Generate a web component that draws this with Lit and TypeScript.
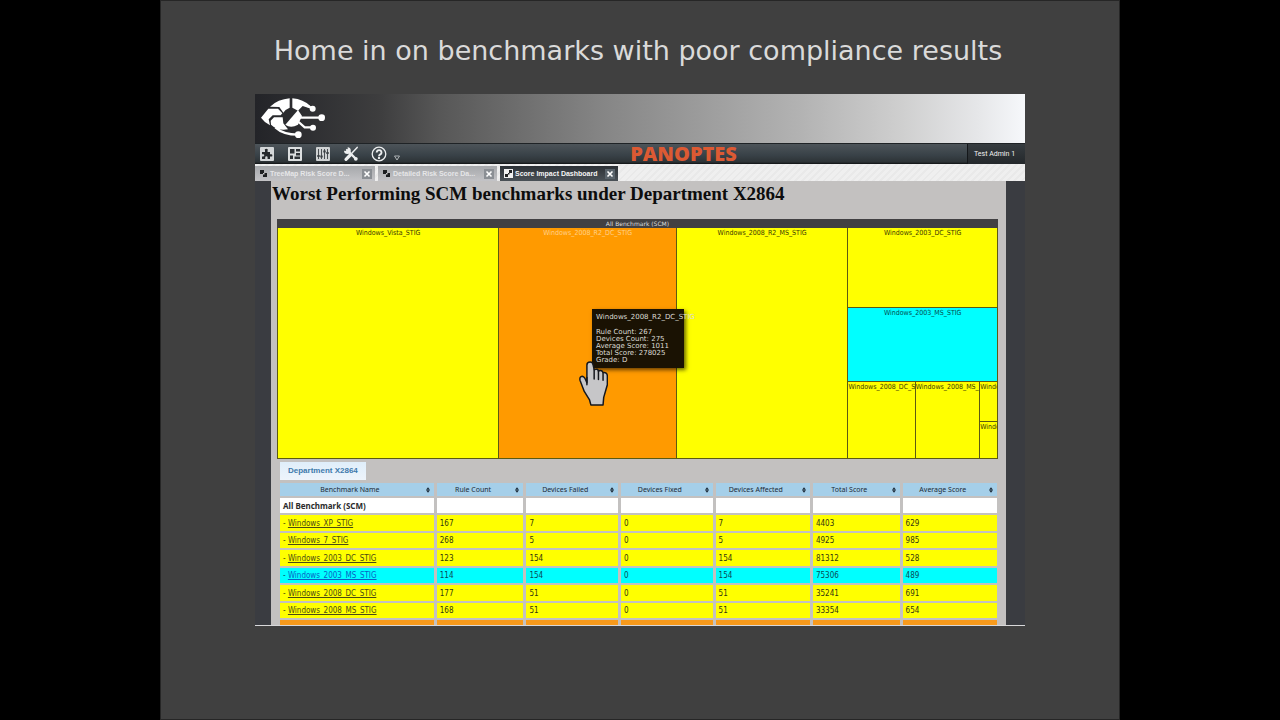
import { LitElement, html, svg, css } from "lit";
import { customElement, property } from "lit/decorators.js";
import { classMap } from "lit/directives/class-map.js";

interface Row {
  name: string;
  values: number[];
  tone: "yellow" | "cyan" | "orange";
}

const COLUMNS = [
  { label: "Benchmark Name", width: 22 },
  { label: "Rule Count", width: 12.4 },
  { label: "Devices Failed", width: 13.1 },
  { label: "Devices Fixed", width: 13.1 },
  { label: "Devices Affected", width: 13.5 },
  { label: "Total Score", width: 12.4 },
  { label: "Average Score", width: 13.5 },
];

const ROWS: Row[] = [
  { name: "Windows_XP_STIG", values: [167, 7, 0, 7, 4403, 629], tone: "yellow" },
  { name: "Windows_7_STIG", values: [268, 5, 0, 5, 4925, 985], tone: "yellow" },
  { name: "Windows_2003_DC_STIG", values: [123, 154, 0, 154, 81312, 528], tone: "yellow" },
  { name: "Windows_2003_MS_STIG", values: [114, 154, 0, 154, 75306, 489], tone: "cyan" },
  { name: "Windows_2008_DC_STIG", values: [177, 51, 0, 51, 35241, 691], tone: "yellow" },
  { name: "Windows_2008_MS_STIG", values: [168, 51, 0, 51, 33354, 654], tone: "yellow" },
];

const TOOLS = [
  {
    label: "Plugins",
    icon: svg`<rect x="1" y="1" width="14" height="14" rx="1" fill="#d3d6d8"/>
      <path d="M3 6h3V4.6a1.4 1.4 0 1 1 2.6 0V6H11v2.2h1.2a1.2 1.2 0 1 1 0 2.4H11V13H8.6v-1.6a1.2 1.2 0 0 0-2.4 0V13H3v-2.6h1.2a1.1 1.1 0 0 0 0-2.2H3z" fill="#25292c"/>`,
  },
  {
    label: "Layouts",
    icon: svg`<rect x="1" y="1" width="14" height="14" rx="1" fill="#dcdfe0"/>
      <path d="M3 3h4.500v4.500H3zM9 3h4v2.500H9zM3 9.500h3V13H3zM9 7h4v2.500H9zM7.500 10.500H13V13H7.500z" fill="#2d3236"/>`,
  },
  {
    label: "Filters",
    icon: svg`<rect x="1" y="1" width="14" height="14" rx="1" fill="#d0d3d4"/>
      <path d="M3.500 3v10M6.500 3v10M9.500 3v10M12.500 3v10" stroke="#4a4f53" stroke-width="1"/>
      <path d="M2.300 10h2.400M5.300 10.500h2.400M8.300 5.500h2.400M11.300 7h2.400" stroke="#3a3f43" stroke-width="1.800"/>`,
  },
  {
    label: "Settings",
    icon: svg`<path d="M4 4l8.500 8.500" stroke="#eceeef" stroke-width="2.400" stroke-linecap="round"/>
      <path d="M1 4.800L3.300 5 4.900 3.400 4.600 1.200A3.400 3.400 0 1 1 1 4.800z" fill="#eceeef"/>
      <path d="M14.200 1.400L9 7" stroke="#eceeef" stroke-width="1.500" stroke-linecap="round"/>
      <path d="M7.800 8.500L3 13.300" stroke="#eceeef" stroke-width="3.200" stroke-linecap="round"/>
      <circle cx="12.800" cy="12.800" r="1.900" fill="#eceeef"/>`,
  },
  {
    label: "Help",
    icon: svg`<circle cx="8" cy="8" r="6.800" fill="none" stroke="#eceeef" stroke-width="1.300"/>
      <path d="M5.700 6.400a2.400 2.300 0 1 1 3.600 2C8.300 9 8 9.300 8 10.200" fill="none" stroke="#eceeef" stroke-width="1.900"/>
      <circle cx="8" cy="12" r="1.200" fill="#eceeef"/>`,
  },
];

@customElement("app-menubar")
class AppMenubar extends LitElement {
  static styles = css`
    :host {
      display: grid;
      grid-template-columns: auto 1fr auto;
      align-items: stretch;
      height: 20px;
      border-top: 1px solid #1f2326;
      background: linear-gradient(#4d5459, #394248 55%, #2d3336 90%, #0f1112);
    }
    .tools { display: flex; align-items: center; padding-left: 4px; }
    .tool {
      display: flex;
      align-items: center;
      width: 16px;
      height: 20px;
      margin-right: 12px;
      padding: 0;
      border: 0;
      background: none;
    }
    .help { margin-right: 7px; }
    .more { width: 6px; margin-right: 0; padding-top: 7px; }
    .brand {
      font: 800 20px/20px "Open Sans", sans-serif;
      color: #dc5a33;
      text-align: center;
    }
    .user {
      box-sizing: border-box;
      width: 58px;
      padding-left: 6px;
      border-left: 1px solid #14171a;
      background: linear-gradient(#363c40, #24282b);
      font: 7px/20px "Roboto", sans-serif;
      color: #f2f2f2;
      white-space: nowrap;
    }
  `;
  render() {
    return html`
      <nav class="tools">
        ${TOOLS.map(
          (t) => html`<button class=${classMap({ tool: true, help: t.label === "Help" })} aria-label=${t.label}>
            <svg width="16" height="16" viewBox="0 0 16 16">${t.icon}</svg>
          </button>`,
        )}
        <button class="tool more" aria-label="More">
          <svg width="6" height="6" viewBox="0 0 6 6"><path d="M0.500 1h5L3 5z" fill="none" stroke="#b9bdc0" stroke-width="0.900"/></svg>
        </button>
      </nav>
      <div class="brand">PANOPTES</div>
      <div class="user">Test Admin 1</div>
    `;
  }
}

@customElement("app-tab")
class AppTab extends LitElement {
  @property() label = "";
  @property({ type: Boolean, reflect: true }) active = false;
  static styles = css`
    :host {
      display: flex;
      align-items: center;
      box-sizing: border-box;
      height: 15px;
      padding: 0 3px 0 4px;
      background: linear-gradient(#a6a8ab, #c3c3c6);
      color: #e6e6e8;
    }
    :host([active]) {
      background: linear-gradient(#2c3136, #4a5157);
      color: #f4f4f4;
    }
    .title {
      display: flex;
      align-items: center;
      flex: 1;
      gap: 2px;
      padding: 0;
      border: 0;
      background: none;
      color: inherit;
      font: bold 7px/14px "Liberation Sans", sans-serif;
      white-space: nowrap;
    }
    .close {
      display: flex;
      padding: 1px;
      border: 0;
      background: #8b8f94;
    }
    :host([active]) .close { background: #59636b; }
  `;
  render() {
    const light = this.active ? "#f0f0f0" : "#c9cacc";
    return html`
      <button class="title">
        <svg width="9" height="9" viewBox="0 0 9 9">
          <rect x="0.500" y="0.500" width="8" height="8" fill=${this.active ? "#202224" : "none"} stroke=${light} stroke-width=${this.active ? 1 : 0}/>
          <path d="M1 1h4v3h3v4H4V5H1z" fill=${this.active ? light : "#1d1f21"}/>
          <path d="M4 4h1.500v1.500H4z" fill=${this.active ? "#202224" : light}/>
        </svg>
        ${this.label}
      </button>
      <button class="close" aria-label="Close tab">
        <svg width="8" height="8" viewBox="0 0 8 8"><path d="M1.500 1.500l5 5M6.500 1.500l-5 5" stroke="#fff" stroke-width="1.600"/></svg>
      </button>
    `;
  }
}

@customElement("score-treemap")
class ScoreTreemap extends LitElement {
  static styles = css`
    :host { display: block; position: relative; }
    .caption {
      height: 9px;
      background: #414042;
      color: #dedede;
      font: 6px/9px "DejaVu Sans", sans-serif;
      text-align: center;
    }
    .map, .stack, .bottom, .rest { display: grid; gap: 1px; min-width: 0; min-height: 0; background: #5c5a12; }
    .map {
      grid-template-columns: 221fr 177fr 171fr 149fr;
      height: 230px;
      padding: 0 1px 1px;
    }
    .stack { grid-template-rows: 79fr 73fr 76fr; }
    .bottom { grid-template-columns: 67fr 64fr 17fr; }
    .rest { grid-template-rows: 39fr 36fr; }
    .cell {
      min-width: 0;
      overflow: hidden;
      background: #ff0;
      color: #3a3905;
      font: 7px/10px "DejaVu Sans Condensed", "DejaVu Sans", sans-serif;
      text-align: center;
      white-space: nowrap;
    }
    .cut { text-align: left; }
    .cyan { background: #0ff; color: #064c4f; }
    .orange { background: #ff9a00; color: #ffd08a; }
    .tip {
      position: absolute;
      left: 315px;
      top: 90px;
      box-sizing: border-box;
      width: 92px;
      height: 59px;
      padding: 4px;
      background: #1a1203;
      box-shadow: 2px 2px 4px rgba(0, 0, 0, 0.6);
      color: #dcdcd6;
      font: 7px/7px "DejaVu Sans", sans-serif;
      white-space: nowrap;
    }
    .tip-name { margin-bottom: 7px; line-height: 9px; }
    .hand { position: absolute; left: 302px; top: 142px; }
  `;
  render() {
    return html`
      <div class="caption">All Benchmark (SCM)</div>
      <div class="map">
        <div class="cell">Windows_Vista_STIG</div>
        <div class="cell orange">Windows_2008_R2_DC_STIG</div>
        <div class="cell">Windows_2008_R2_MS_STIG</div>
        <div class="stack">
          <div class="cell">Windows_2003_DC_STIG</div>
          <div class="cell cyan">Windows_2003_MS_STIG</div>
          <div class="bottom">
            <div class="cell cut">Windows_2008_DC_STIG</div>
            <div class="cell cut">Windows_2008_MS_STIG</div>
            <div class="rest">
              <div class="cell cut">Windows_7_STIG</div>
              <div class="cell cut">Windows_XP_STIG</div>
            </div>
          </div>
        </div>
      </div>
      <div class="tip" role="tooltip">
        <div class="tip-name">Windows_2008_R2_DC_STIG</div>
        <div>Rule Count: 267</div>
        <div>Devices Count: 275</div>
        <div>Average Score: 1011</div>
        <div>Total Score: 278025</div>
        <div>Grade: D</div>
      </div>
      <svg class="hand" width="29" height="45" viewBox="56 212 88 136">
        <path d="M80 278V224Q80 215 90 215Q98 215 99 224L102 238Q113 234 115 242Q126 238 129 247Q141 245 142 256V284L131 322L129 345H92L88 330L72 304L59 270Q57 259 66 258Q73 258 80 278Z"
          fill="#c6c6c8" stroke="#15171c" stroke-width="4.500" stroke-linejoin="round"/>
        <path d="M102 238V266M115 242V268M129 247V270M80 262V284" fill="none" stroke="#15171c" stroke-width="4.500" stroke-linecap="round"/>
      </svg>
    `;
  }
}

@customElement("benchmark-table")
class BenchmarkTable extends LitElement {
  static styles = css`
    :host { display: block; }
    table {
      width: 100%;
      table-layout: fixed;
      border-collapse: separate;
      border-spacing: 3px 2px;
      font: 8px/15px "DejaVu Sans Condensed", "DejaVu Sans", sans-serif;
      color: #33350f;
    }
    th, td { padding: 0; height: 15px; white-space: nowrap; text-align: left; }
    thead th { height: 13px; background: #a5cfe9; font-weight: normal; }
    .sort {
      display: flex;
      align-items: center;
      width: 100%;
      height: 13px;
      padding: 0 4px 0 0;
      border: 0;
      background: none;
      color: #1c2a37;
      font: 7px/13px "Noto Sans", sans-serif;
    }
    .sort span { flex: 1; padding-right: 6px; text-align: center; }
    td, tbody th { padding-left: 3px; }
    .total th, .total td { background: #fff; }
    .total th { font: bold 8px/15px "Noto Sans", sans-serif; color: #2b2b2b; }
    .yellow td { background: #ff0; }
    .cyan td { background: #0ff; color: #0b4a55; }
    .orange td { background: #f79a1c; }
    tbody tr:nth-child(even) td { height: 16px; }
    a { color: #4a4a14; }
    .cyan a { color: #0a62c4; }
  `;
  render() {
    return html`
      <table>
        <colgroup>
          ${COLUMNS.map((c) => html`<col style="width:${c.width}%" />`)}
        </colgroup>
        <thead>
          <tr>
            ${COLUMNS.map(
              (c) => html`<th scope="col">
                <button class="sort">
                  <span>${c.label}</span>
                  <svg width="4" height="6" viewBox="0 0 5 7"><path d="M2.500 0L5 3.200H0zM2.500 7L0 3.800h5z" fill="#1d2c3a"/></svg>
                </button>
              </th>`,
            )}
          </tr>
        </thead>
        <tbody>
          <tr class="total">
            <th scope="row">All Benchmark (SCM)</th>
            ${COLUMNS.slice(1).map(() => html`<td></td>`)}
          </tr>
          ${ROWS.map(
            (r) => html`<tr class=${classMap({ [r.tone]: true })}>
              <td>- <a href="#">${r.name}</a></td>
              ${r.values.map((v) => html`<td>${v}</td>`)}
            </tr>`,
          )}
          <tr class="orange">${COLUMNS.map(() => html`<td></td>`)}</tr>
        </tbody>
      </table>
    `;
  }
}

@customElement("app-root")
class AppRoot extends LitElement {
  static styles = css`
    :host { display: flex; justify-content: center; height: 100vh; background: #000; }
    .slide {
      display: flex;
      flex-direction: column;
      box-sizing: border-box;
      width: 75%;
      padding: 0 94px 93px;
      border: 1px solid #262626;
      background: #404040;
    }
    h1 {
      margin: 0;
      padding: 25px 4px 18px 0;
      font: 27px/50px "DejaVu Sans", sans-serif;
      color: #dadada;
      text-align: center;
      white-space: nowrap;
    }
    .window {
      display: flex;
      flex-direction: column;
      flex: 1;
      min-height: 0;
      border-bottom: 1px solid #d8d8da;
    }
    .banner {
      flex: none;
      box-sizing: border-box;
      height: 49px;
      padding: 4px 6px;
      background: linear-gradient(90deg, #232428, #3d3d3e 16%, #575757 24%, #858585 45%, #b3b3b3 71%, #cfcfcf 84%, #e6e7e9 94%, #f6f8fb);
    }
    app-menubar { flex: none; }
    .tabs {
      display: flex;
      flex: none;
      gap: 3px;
      height: 15px;
      padding-top: 2px;
      background: repeating-linear-gradient(135deg, #efefef 0 3px, #e9e9e9 3px 5px);
    }
    .tab-a { width: 120px; }
    .tab-b { width: 119px; }
    .tab-c { width: 118px; }
    .body {
      flex: 1;
      min-height: 0;
      overflow: hidden;
      border-left: 16px solid #3a3c41;
      border-right: 19px solid #3a3c41;
      background: #c3c1c0;
    }
    h2 {
      margin: 0 0 12px;
      padding-left: 1px;
      font: bold 19px/26px "Liberation Serif", serif;
      color: #0d0d0d;
      white-space: nowrap;
    }
    .panel { padding: 0 6px; }
    score-treemap { margin-right: 2px; }
    .crumb {
      display: block;
      height: 18px;
      margin: 3px 3px 1px;
      padding: 0 8px;
      border: 0;
      background: linear-gradient(#dfeefa, #eef4fb);
      color: #3f79ab;
      font: bold 8px/18px "Liberation Sans", sans-serif;
    }
  `;
  render() {
    return html`
      <main class="slide">
        <h1>Home in on benchmarks with poor compliance results</h1>
        <section class="window">
          <header class="banner">
            <svg width="64" height="40" viewBox="15 12 192 120" role="img" aria-label="Logo">
              <g fill="#fff">
                <path d="M42 38Q66 16 101 13V41Q88 46 82 56L70 39Z"/>
                <path d="M15 71L37 44H66L79 58 74 64H50L38 76 42 94Q24 84 15 71Z"/>
                <path d="M45 92L44 80 54 70H80L82 88 96 106Q66 112 45 92Z"/>
                <path d="M109 13Q142 16 163 36L158 42 140 36 126 50 109 41Z"/>
                <path d="M126 48L138 66 126 92Q104 104 88 92Z"/>
                <circle cx="170" cy="44" r="9"/><circle cx="197" cy="71" r="10"/>
                <circle cx="171" cy="101" r="9"/><circle cx="127" cy="122" r="10"/>
              </g>
              <path d="M130 71H195M128 84L146 100H170M58 100Q82 122 126 122M140 28L168 43" fill="none" stroke="#fff" stroke-width="7"/>
            </svg>
          </header>
          <app-menubar></app-menubar>
          <div class="tabs">
            <app-tab class="tab-a" label="TreeMap Risk Score D..."></app-tab>
            <app-tab class="tab-b" label="Detailed Risk Score Da..."></app-tab>
            <app-tab class="tab-c" label="Score Impact Dashboard" active></app-tab>
          </div>
          <div class="body">
            <h2>Worst Performing SCM benchmarks under Department X2864</h2>
            <div class="panel">
              <score-treemap></score-treemap>
              <button class="crumb">Department X2864</button>
              <benchmark-table></benchmark-table>
            </div>
          </div>
        </section>
      </main>
    `;
  }
}
